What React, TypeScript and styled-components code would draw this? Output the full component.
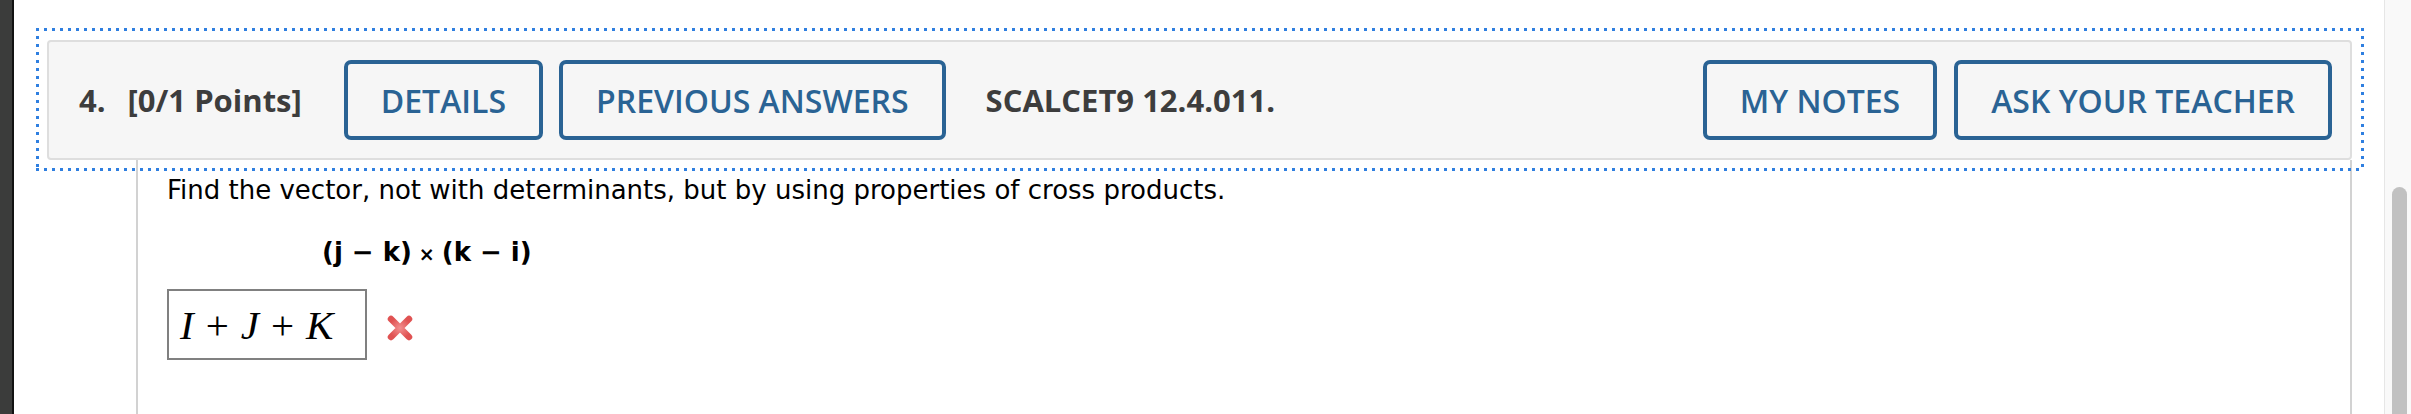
import { FC } from "react";
import styled, { createGlobalStyle } from "styled-components";

const GlobalStyle = createGlobalStyle`
  html, body {
    margin: 0;
    padding: 0;
    background: #ffffff;
    overflow: hidden;
  }
`;

const focusBlue = "#2f7fe0";
const dotsX = `repeating-linear-gradient(to right, ${focusBlue} 0 3px, transparent 3px 8px)`;
const dotsY = `repeating-linear-gradient(to bottom, ${focusBlue} 0 3px, transparent 3px 8px)`;

const Page = styled.div`
  display: flex;
  width: 2411px;
  height: 414px;
  overflow: hidden;
`;

const SideStrip = styled.div`
  flex: 0 0 12px;
  background: #3b3c3b;
  border-right: 2px solid #121212;
`;

const Main = styled.main`
  flex: 1;
  padding: 0 32px 0 33px;
  display: flex;
  flex-direction: column;
`;

const PrevCardEdge = styled.div`
  height: 1px;
  background: #e0e0e0;
`;

const Question = styled.section`
  margin-top: 40px;
  display: flex;
  flex-direction: column;
`;

const Header = styled.header`
  position: relative;
  z-index: 1;
  box-sizing: border-box;
  height: 120px;
  display: flex;
  align-items: center;
  padding: 0 18px 0 30px;
  background: #f6f6f6;
  border: 2px solid #dedede;
  border-radius: 4px;
  font-family: "Open Sans", "Liberation Sans", sans-serif;

  /* keyboard focus ring, square dots like the browser draws it */
  &::after {
    content: "";
    position: absolute;
    top: -14px;
    right: -14px;
    bottom: -13px;
    left: -13px;
    pointer-events: none;
    background:
      ${dotsX} top left / 100% 3px no-repeat,
      ${dotsX} bottom left / 100% 3px no-repeat,
      ${dotsY} top left / 3px 100% no-repeat,
      ${dotsY} top right / 3px 100% no-repeat;
  }
`;

const Number = styled.span`
  font-size: 31px;
  font-weight: 700;
  color: #3d3d3d;
  margin-right: 22px;
`;

const Points = styled.span`
  font-size: 31px;
  font-weight: 700;
  color: #3d3d3d;
  margin-right: 42px;
`;

const Reference = styled.span`
  font-size: 31px;
  font-weight: 700;
  color: #3d3d3d;
  margin-left: 40px;
`;

const Spacer = styled.div`
  flex: 1;
`;

const ActionButton = styled.button<{ $gap?: number }>`
  box-sizing: border-box;
  height: 80px;
  padding: 0 33px;
  margin-right: ${(p) => p.$gap ?? 0}px;
  background: transparent;
  border: 4px solid #2a6394;
  border-radius: 7px;
  color: #2a6394;
  font-family: "Open Sans", "Liberation Sans", sans-serif;
  font-size: 32px;
  font-weight: 600;
  cursor: pointer;
`;

const Body = styled.div`
  margin-left: 89px;
  height: 260px;
  border-left: 2px solid #d2d2d2;
  border-right: 2px solid #d2d2d2;
  padding: 15px 29px 0;
  font-family: Verdana, "DejaVu Sans", sans-serif;
  font-size: 26px;
  color: #000;
`;

const Prompt = styled.p`
  margin: 0;
`;

const Formula = styled.p`
  margin: 32px 0 0 155px;
  font-weight: 700;
`;

const Times = styled.span`
  font-weight: 700;
  font-size: 19px;
  margin: 0 7px;
`;

const AnswerRow = styled.div`
  display: flex;
  align-items: center;
  gap: 19px;
  margin-top: 22px;
`;

const AnswerBox = styled.div`
  box-sizing: border-box;
  width: 200px;
  height: 71px;
  border: 2px solid #808080;
  padding: 0 0 0 11px;
  display: flex;
  align-items: center;
  font-family: "Liberation Serif", "Times New Roman", serif;
  font-size: 41px;
`;

const MathVar = styled.i`
  font-style: italic;
`;

const MathOp = styled.span`
  margin: 0 12px;
`;

const WrongMark = styled.svg`
  width: 28px;
  height: 28px;
  margin-top: 6px;
`;

const Scrollbar = styled.div`
  flex: 0 0 27px;
  box-sizing: border-box;
  background: #f9f9f9;
  border-left: 1px solid #e6e6e6;
  padding: 187px 4px 0 7px;
`;

const Thumb = styled.div`
  height: 300px;
  background: #c1c1c1;
  border-radius: 8px;
`;

const CrossIcon: FC = () => (
  <WrongMark viewBox="0 0 28 28">
    <defs>
      <radialGradient id="xg" cx="50%" cy="50%" r="60%">
        <stop offset="0%" stopColor="#f29090" />
        <stop offset="100%" stopColor="#e05252" />
      </radialGradient>
    </defs>
    <path
      d="M5 5 L23 23 M23 5 L5 23"
      stroke="url(#xg)"
      strokeWidth="6.5"
      strokeLinecap="round"
      fill="none"
    />
  </WrongMark>
);

const App: FC = () => {
  return (
    <>
      <GlobalStyle />
      <Page>
        <SideStrip />
        <Main>
          <PrevCardEdge />
          <Question>
            <Header>
              <Number>4.</Number>
              <Points>[0/1 Points]</Points>
              <ActionButton $gap={16}>DETAILS</ActionButton>
              <ActionButton>PREVIOUS ANSWERS</ActionButton>
              <Reference>SCALCET9 12.4.011.</Reference>
              <Spacer />
              <ActionButton $gap={17}>MY NOTES</ActionButton>
              <ActionButton>ASK YOUR TEACHER</ActionButton>
            </Header>
            <Body>
              <Prompt>
                Find the vector, not with determinants, but by using properties of cross products.
              </Prompt>
              <Formula>
                (j − k)<Times>×</Times>(k − i)
              </Formula>
              <AnswerRow>
                <AnswerBox>
                  <MathVar>I</MathVar>
                  <MathOp>+</MathOp>
                  <MathVar>J</MathVar>
                  <MathOp>+</MathOp>
                  <MathVar>K</MathVar>
                </AnswerBox>
                <CrossIcon />
              </AnswerRow>
            </Body>
          </Question>
        </Main>
        <Scrollbar>
          <Thumb />
        </Scrollbar>
      </Page>
    </>
  );
};

export default App;
